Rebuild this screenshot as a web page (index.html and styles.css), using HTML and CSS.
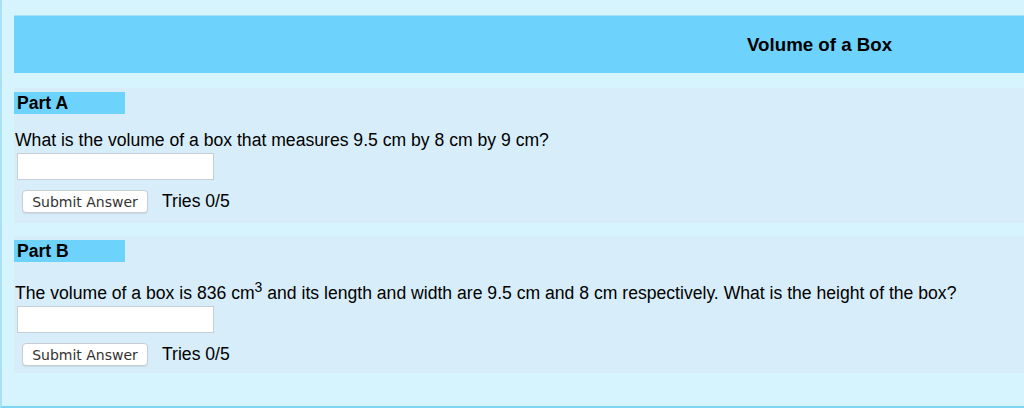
FILE: index.html
```html
<!DOCTYPE html>
<html lang="en">

<head>
    <meta charset="UTF-8" />
    <meta name="viewport" content="width=device-width, initial-scale=1.0" />
    <title>Volume of a Box</title>
    <link rel="stylesheet" href="styles.css">
</head>

<body>
    <div class="problem">
        <div class="header">
            <h3>Volume of a Box</h3>
        </div>

        <div class="part part-a">
            <h4 class="label">Part A</h4>
            <p class="question">What is the volume of a box that measures 9.5 cm by 8 cm by 9 cm?</p>
            <input type="text" class="answer">
            <div class="submit-row">
                <button>Submit Answer</button>
                <span class="tries">Tries 0/5</span>
            </div>
        </div>

        <div class="part part-b">
            <h4 class="label">Part B</h4>
            <p class="question">The volume of a box is 836 cm<sup>3</sup> and its length and width are 9.5 cm and 8 cm respectively. What is the height of the box?</p>
            <input type="text" class="answer">
            <div class="submit-row">
                <button>Submit Answer</button>
                <span class="tries">Tries 0/5</span>
            </div>
        </div>
    </div>
</body>

</html>
```

FILE: styles.css
```css
* {
    box-sizing: border-box;
    margin: 0;
    padding: 0;
}

body {
    font-family: 'Liberation Sans', Arial, Helvetica, sans-serif;
    background: #fff;
    color: #000;
    overflow: hidden;
}

.problem {
    background: #d5f4fd;
    border-left: 2px solid #a9e2f6;
    border-bottom: 2px solid #7fd3f3;
    padding: 15px 0 33px 12px;
}

.header {
    display: flex;
    align-items: center;
    height: 58px;
    background: #6dd2fc;
    border-top: 1px solid #a3e2fa;
    padding-left: 733px;
}

.header h3 {
    font-size: 18.72px;
    font-weight: bold;
}

.part {
    background: #d7eefa;
    padding: 4px 0 10px 0;
}

.part-a {
    margin-top: 15px;
}

.part-b {
    margin-top: 13px;
    padding-bottom: 7px;
}

.label {
    width: 111px;
    height: 22px;
    line-height: 22px;
    background: #6dd3fc;
    font-size: 17.6px;
    font-weight: bold;
    padding-left: 3px;
}

.question {
    font-size: 17.6px;
    line-height: 20px;
    margin-top: 16px;
    padding-left: 1px;
}

.part-b .question {
    margin-top: 21px;
}

.question sup {
    font-size: 14px;
    line-height: 0;
    vertical-align: 7px;
}

.answer {
    display: block;
    width: 197px;
    height: 27px;
    margin: 3px 0 0 3px;
    background: #fff;
    border: 1px solid #c5ced6;
    outline: none;
}

.submit-row {
    display: flex;
    align-items: center;
    gap: 14px;
    margin: 10px 0 0 8px;
}

.submit-row button {
    width: 126px;
    height: 23px;
    background: #fff;
    border: 1px solid #c9cdd1;
    border-radius: 4px;
    box-shadow: 0 1px 1px rgba(0, 0, 0, 0.08);
    font-family: 'DejaVu Sans', 'Lucida Grande', sans-serif;
    font-size: 14px;
    color: #333;
}

.tries {
    font-size: 17.6px;
}
```
